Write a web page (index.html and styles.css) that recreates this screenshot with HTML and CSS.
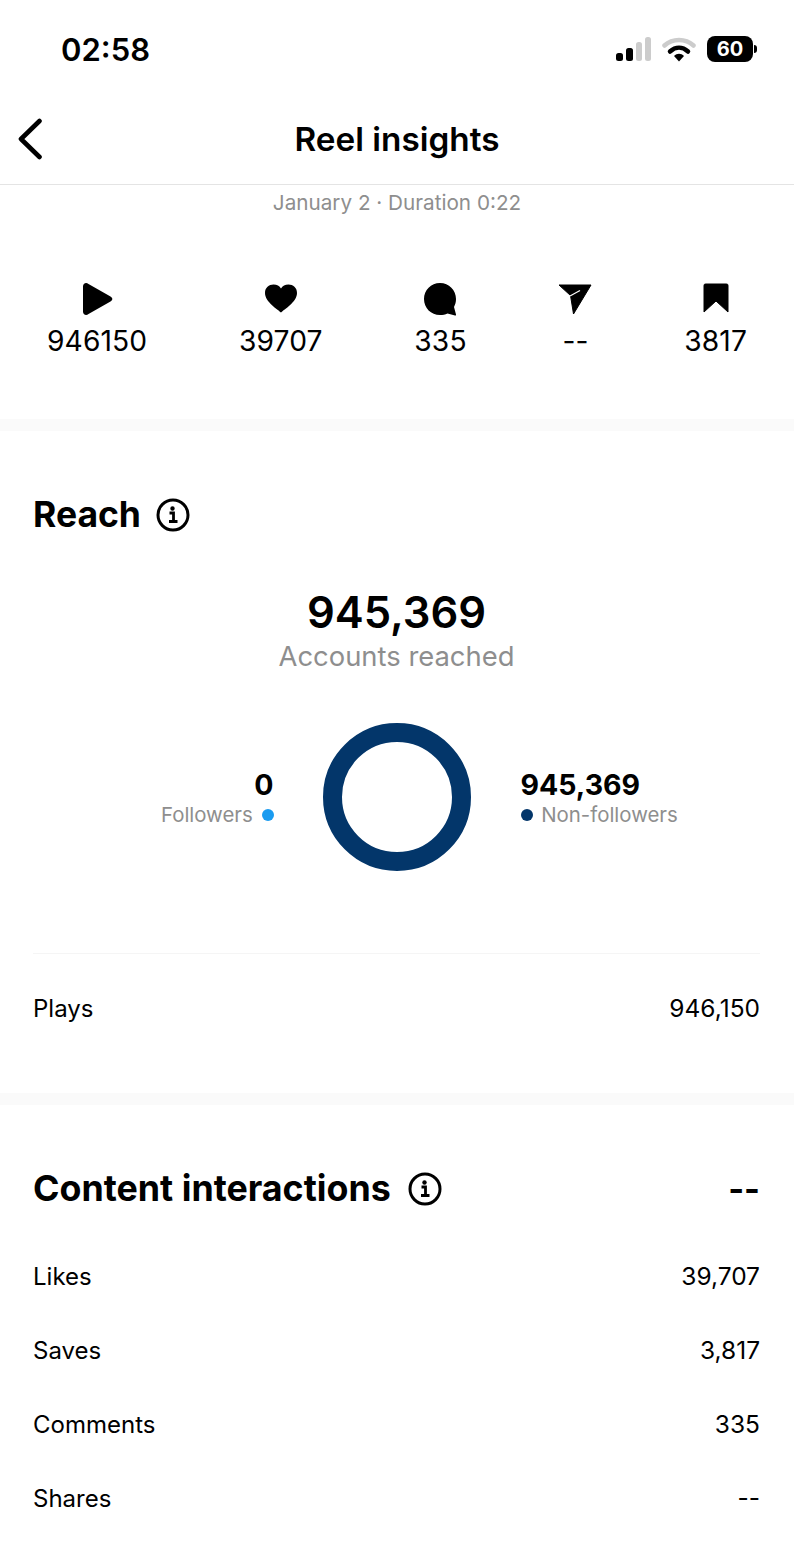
FILE: index.html
```html
<!DOCTYPE html>
<html lang="en">
<head>
  <meta charset="UTF-8">
  <title>Reel insights</title>
  <link rel="stylesheet" href="styles.css">
</head>
<body>
  <div class="status-bar">
    <span class="clock">02:58</span>
    <div class="status-icons">
      <svg width="35" height="24" viewBox="0 0 35 24">
        <rect x="0" y="16" width="7" height="8" rx="2.5" fill="#000"/>
        <rect x="10" y="11" width="7" height="13" rx="2.5" fill="#000"/>
        <rect x="20" y="5" width="6" height="19" rx="2.5" fill="#ccc"/>
        <rect x="29" y="0" width="6" height="24" rx="2.5" fill="#ccc"/>
      </svg>
      <svg class="wifi" width="34" height="25" viewBox="0 0 34 25">
        <path d="M2.500 8.500C10.500 1 23.500 1 31.500 8.500" fill="none" stroke="#ccc" stroke-width="4.500" stroke-linecap="round"/>
        <path d="M8 14.500C13.500 9.500 20.500 9.500 26 14.500" fill="none" stroke="#000" stroke-width="4.500" stroke-linecap="round"/>
        <path d="M12 19C15 16 19 16 22 19L17 24.500Z" fill="#000"/>
      </svg>
      <div class="battery"><span class="battery-level">60</span><span class="battery-cap"></span></div>
    </div>
  </div>

  <header class="nav-bar">
    <svg class="back" width="26" height="42" viewBox="0 0 26 42">
      <path d="M22.500 3L4 21L22.500 39" fill="none" stroke="#000" stroke-width="4.600" stroke-linecap="round" stroke-linejoin="round"/>
    </svg>
    <h1>Reel insights</h1>
  </header>

  <p class="date">January 2 · Duration 0:22</p>

  <section class="stats">
    <div class="stat">
      <svg width="32" height="34" viewBox="0 0 32 34"><path d="M2 4.500C2 1.500 5 0 7.500 2L29.500 14.500C32 16 32 18 29.500 19.500L7.500 32C5 34 2 32.500 2 29.500Z" fill="#000"/></svg>
      <span>946150</span>
    </div>
    <div class="stat">
      <svg width="34" height="34" viewBox="0 0 34 34"><path d="M17 30.500C14 27.500 1 20 1 11C1 5.500 5 2.500 9.500 2.500C13 2.500 15.500 4 17 6.500C18.500 4 21 2.500 24.500 2.500C29 2.500 33 5.500 33 11C33 20 20 27.500 17 30.500Z" fill="#000"/></svg>
      <span>39707</span>
    </div>
    <div class="stat">
      <svg width="34" height="34" viewBox="0 0 34 34"><path d="M17 1C26 1 33 8 33 17C33 20 32.300 22.500 31 25L33 32.500C33.200 33.300 32.800 33.700 32 33.500L24.500 31.500C22.300 32.600 19.800 33 17 33C8 33 1 26 1 17C1 8 8 1 17 1Z" fill="#000"/></svg>
      <span>335</span>
    </div>
    <div class="stat">
      <svg width="34" height="34" viewBox="0 0 34 34"><path d="M1 3H33L15.500 32L12.500 13.500Z" fill="#000" stroke="#000" stroke-width="1" stroke-linejoin="round"/><path d="M12 14L22 8.500" stroke="#fff" stroke-width="1.200"/></svg>
      <span>--</span>
    </div>
    <div class="stat">
      <svg width="26" height="34" viewBox="0 0 26 34"><path d="M1 3.500C1 2.500 1.500 2 2.500 2H23.500C24.500 2 25 2.500 25 3.500V30L13 19L1 30Z" fill="#000" stroke="#000" stroke-linejoin="round"/></svg>
      <span>3817</span>
    </div>
  </section>

  <div class="band"></div>

  <section class="reach">
    <div class="section-title">
      <h2>Reach</h2>
      <svg class="info" width="34" height="34" viewBox="0 0 34 34">
        <circle cx="17" cy="17" r="15" fill="none" stroke="#000" stroke-width="3"/>
        <circle cx="16.500" cy="10.500" r="2.200" fill="#000"/>
        <path d="M13.500 15H17.500V23M13 23.500H21.500" fill="none" stroke="#000" stroke-width="2.800"/>
      </svg>
    </div>

    <div class="reach-total">
      <strong>945,369</strong>
      <span>Accounts reached</span>
    </div>

    <div class="breakdown">
      <div class="legend legend-left">
        <strong>0</strong>
        <span>Followers <i class="dot dot-light"></i></span>
      </div>
      <div class="donut"></div>
      <div class="legend legend-right">
        <strong>945,369</strong>
        <span><i class="dot dot-dark"></i> Non-followers</span>
      </div>
    </div>

    <div class="rule"></div>

    <div class="row plays"><span>Plays</span><span class="value">946,150</span></div>
  </section>

  <div class="band"></div>

  <section class="interactions">
    <div class="section-title">
      <h2>Content interactions</h2>
      <svg class="info" width="34" height="34" viewBox="0 0 34 34">
        <circle cx="17" cy="17" r="15" fill="none" stroke="#000" stroke-width="3"/>
        <circle cx="16.500" cy="10.500" r="2.200" fill="#000"/>
        <path d="M13.500 15H17.500V23M13 23.500H21.500" fill="none" stroke="#000" stroke-width="2.800"/>
      </svg>
      <span class="title-value">--</span>
    </div>
    <div class="row"><span>Likes</span><span class="value">39,707</span></div>
    <div class="row"><span>Saves</span><span class="value">3,817</span></div>
    <div class="row"><span>Comments</span><span class="value">335</span></div>
    <div class="row"><span>Shares</span><span class="value">--</span></div>
  </section>
</body>
</html>
```

FILE: styles.css
```css
* {
  margin: 0;
  padding: 0;
  box-sizing: border-box;
}

body {
  font-family: Inter, "Liberation Sans", sans-serif;
  background-color: #fff;
  color: #000;
  overflow: hidden;
}

.status-bar {
  height: 97px;
  padding: 1px 37px 0 61px;
  display: flex;
  align-items: center;
  justify-content: space-between;
}

.clock {
  font-size: 31px;
  font-weight: 600;
}

.status-icons {
  display: flex;
  align-items: center;
  gap: 11px;
}

.battery {
  display: flex;
  align-items: center;
  gap: 1px;
}

.battery-level {
  width: 46px;
  height: 26px;
  background-color: #000;
  color: #fff;
  border-radius: 8px;
  font-size: 20px;
  font-weight: 700;
  line-height: 26px;
  text-align: center;
}

.battery-cap {
  width: 3px;
  height: 8px;
  background-color: #000;
  border-radius: 0 4px 4px 0;
}

.nav-bar {
  position: relative;
  height: 88px;
  padding-bottom: 4px;
  display: flex;
  align-items: center;
  justify-content: center;
  border-bottom: 1px solid #e4e4e4;
}

.nav-bar h1 {
  font-size: 33.300px;
  font-weight: 600;
}

.back {
  position: absolute;
  left: 17px;
  top: 21px;
}

.date {
  text-align: center;
  color: #8e8e8e;
  font-size: 20.700px;
  line-height: 36px;
}

.stats {
  height: 198px;
  padding: 61px 47px 0;
  display: flex;
  justify-content: space-between;
}

.stat {
  display: flex;
  flex-direction: column;
  align-items: center;
  gap: 6px;
  font-size: 28.200px;
  letter-spacing: 0.1px;
  line-height: 38px;
}

.band {
  height: 12px;
  background-color: #fafafa;
}

.section-title {
  display: flex;
  align-items: center;
  gap: 15px;
}

.section-title h2 {
  font-size: 35.500px;
  font-weight: 700;
  line-height: 44px;
}

.title-value {
  margin-left: auto;
  font-size: 34px;
  font-weight: 700;
}

.reach {
  height: 662px;
  padding: 62px 34px 0 33px;
}

.reach-total {
  margin-top: 48px;
  display: flex;
  flex-direction: column;
  align-items: center;
}

.reach-total strong {
  font-size: 43.500px;
  font-weight: 600;
  line-height: 54px;
}

.reach-total span {
  font-size: 27.400px;
  line-height: 34px;
  color: #8e8e8e;
}

.breakdown {
  margin-top: 50px;
  display: flex;
  align-items: center;
  justify-content: center;
  gap: 49px;
}

.donut {
  width: 148px;
  height: 148px;
  border: 19px solid #03366a;
  border-radius: 50%;
}

.legend {
  width: 200px;
  margin-top: 2px;
  display: flex;
  flex-direction: column;
}

.legend strong {
  font-size: 28.500px;
  font-weight: 700;
  line-height: 34px;
}

.legend span {
  font-size: 20.400px;
  line-height: 26px;
  color: #8e8e8e;
  white-space: nowrap;
}

.legend-left {
  align-items: flex-end;
}

.legend-right strong {
  margin-left: 1px;
}

.dot {
  display: inline-block;
  width: 12px;
  height: 12px;
  border-radius: 50%;
  vertical-align: 1px;
}

.dot-light {
  background-color: #1a9bf0;
  margin-left: 3px;
}

.dot-dark {
  background-color: #03366a;
  margin: 0 3px 0 1px;
}

.rule {
  margin-top: 82px;
  height: 1px;
  background-color: #f5f5f5;
}

.row {
  height: 74px;
  display: flex;
  align-items: center;
  justify-content: space-between;
  font-size: 24px;
}

.value {
  font-size: 24.500px;
}

.plays {
  margin-top: 17px;
}

.interactions {
  padding: 62px 34px 0 33px;
}

.interactions .section-title {
  gap: 17px;
  margin-bottom: 29px;
}

.interactions h2 {
  font-size: 35.800px;
  line-height: 43px;
}
```
